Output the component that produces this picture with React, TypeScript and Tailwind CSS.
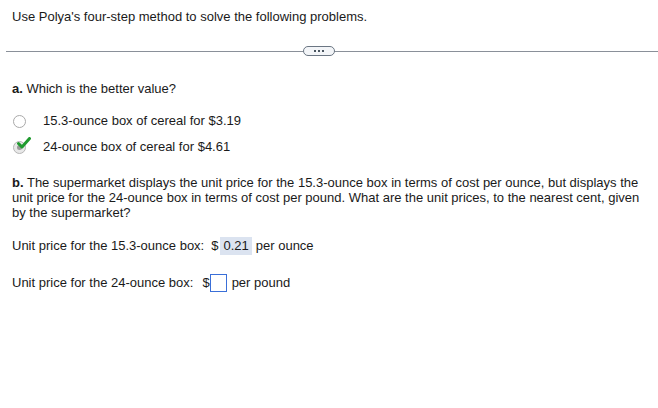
import React from "react";

export default function App() {
  return (
    <div
      className="w-[658px] h-[408px] bg-white text-[13px] text-[#1a1a1a] overflow-hidden"
      style={{ fontFamily: '"Liberation Sans", Arial, sans-serif' }}
    >
      <div className="pl-[12px] pt-[9px] leading-[16px]">
        Use Polya's four-step method to solve the following problems.
      </div>
      <div className="relative mt-[26px] ml-[6px] h-[1px] bg-[#8a9099]">
        <div className="absolute left-[297px] top-[-5px] w-[32px] h-[10px] rounded-full border border-[#6b7683] bg-[#f3f5f8] flex items-center justify-center gap-[2px]">
          <span className="w-[2px] h-[2px] bg-[#4a5560]" />
          <span className="w-[2px] h-[2px] bg-[#4a5560]" />
          <span className="w-[2px] h-[2px] bg-[#4a5560]" />
        </div>
      </div>
      <div className="pl-[12px] mt-[29px] leading-[16px]">
        <b>a.</b> Which is the better value?
      </div>
      <div className="mt-[16px] flex items-center h-[16px]">
        <span className="ml-[13px] w-[13px] h-[13px] rounded-full border border-[#a9a9a9] bg-white" />
        <span className="ml-[17px]">15.3-ounce box of cereal for $3.19</span>
      </div>
      <div className="mt-[10px] flex items-center h-[16px]">
        <span className="relative ml-[13px] w-[13px] h-[13px] rounded-full border border-[#b5b5b5] bg-[#e8e8e8] flex items-center justify-center">
          <span className="w-[5px] h-[5px] rounded-full bg-[#9a9a9a]" />
          <svg className="absolute left-[3px] top-[-5px]" width="14" height="12" viewBox="0 0 14 12">
            <path d="M1.5 6.5 L5 10 L12.5 1.5" fill="none" stroke="#1f9a2e" strokeWidth="3" strokeLinecap="round" strokeLinejoin="round" />
          </svg>
        </span>
        <span className="ml-[17px]">24-ounce box of cereal for $4.61</span>
      </div>
      <div className="pl-[12px] pr-[18px] mt-[20px] leading-[15px]">
        <b>b.</b> The supermarket displays the unit price for the 15.3-ounce box in terms of cost per ounce, but displays the unit price for the 24-ounce box in terms of cost per pound. What are the unit prices, to the nearest cent, given by the supermarket?
      </div>
      <div className="pl-[12px] mt-[17px] flex items-center h-[18px]">
        <span>Unit price for the 15.3-ounce box:</span>
        <span className="ml-[7px]">$</span>
        <span className="ml-[2px] px-[3px] h-[18px] leading-[18px] bg-[#dbe3f0]">0.21</span>
        <span className="ml-[4px]">per ounce</span>
      </div>
      <div className="pl-[12px] mt-[19px] flex items-center h-[18px]">
        <span>Unit price for the 24-ounce box:</span>
        <span className="ml-[9px]">$</span>
        <span className="w-[17px] h-[18px] border border-[#3a6fd8] bg-white" />
        <span className="ml-[5px]">per pound</span>
      </div>
    </div>
  );
}
